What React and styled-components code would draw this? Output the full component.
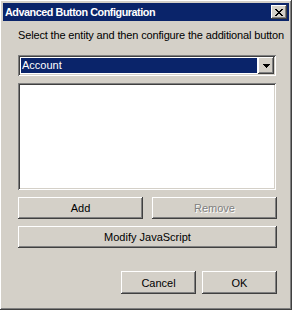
import React from "react";
import styled, { createGlobalStyle, css } from "styled-components";

const Global = createGlobalStyle`
  html, body { margin: 0; padding: 0; background: #d4d0c8; }
  body { font-family: "Liberation Sans", Arial, sans-serif; font-size: 11px; }
`;

const raised = css`
  box-shadow: inset -1px -1px #404040, inset 1px 1px #ffffff,
    inset -2px -2px #808080, inset 2px 2px #d4d0c8;
`;

const sunken = css`
  box-shadow: inset 1px 1px #808080, inset -1px -1px #ffffff,
    inset 2px 2px #404040, inset -2px -2px #d4d0c8;
`;

const Window = styled.div`
  box-sizing: border-box;
  width: 292px;
  height: 310px;
  padding: 3px;
  background: #d4d0c8;
  box-shadow: inset -1px -1px #404040, inset 1px 1px #ffffff,
    inset -2px -2px #808080, inset 2px 2px #d4d0c8;
  display: flex;
  flex-direction: column;
`;

const TitleBar = styled.div`
  height: 18px;
  background: #0a246a;
  display: flex;
  align-items: center;
  justify-content: space-between;
  padding: 0 2px 0 2px;
`;

const Title = styled.span`
  color: #ffffff;
  font-weight: bold;
  font-size: 10.8px;
  letter-spacing: -0.45px;
  line-height: 18px;
`;

const CloseButton = styled.div`
  box-sizing: border-box;
  width: 16px;
  height: 14px;
  background: #d4d0c8;
  ${raised};
  display: flex;
  align-items: center;
  justify-content: center;
`;

const Content = styled.div`
  display: flex;
  flex-direction: column;
  padding: 0 12px 0 15px;
`;

const Label = styled.div`
  margin-top: 8px;
  line-height: 13px;
  color: #000;
  white-space: nowrap;
  letter-spacing: -0.15px;
`;

const Combo = styled.div`
  box-sizing: border-box;
  margin-top: 13px;
  height: 21px;
  width: 258px;
  background: #ffffff;
  ${sunken};
  padding: 2px;
  display: flex;
  gap: 1px;
`;

const Selected = styled.div`
  flex: 1;
  margin: 1px 0 1px 1px;
  background: #0a246a;
  color: #fff;
  line-height: 15px;
  padding-left: 1px;
`;

const ArrowButton = styled.div`
  box-sizing: border-box;
  width: 16px;
  height: 17px;
  background: #d4d0c8;
  ${raised};
  display: flex;
  align-items: center;
  justify-content: center;
`;

const ListBox = styled.div`
  box-sizing: border-box;
  margin-top: 7px;
  height: 107px;
  width: 258px;
  background: #ffffff;
  ${sunken};
`;

const Row = styled.div`
  display: flex;
  gap: ${(p) => p.$gap}px;
  margin-top: ${(p) => p.$top}px;
  justify-content: ${(p) => (p.$end ? "flex-end" : "flex-start")};
`;

const Button = styled.div`
  box-sizing: border-box;
  width: ${(p) => p.$w}px;
  height: ${(p) => p.$h || 22}px;
  background: #d4d0c8;
  ${raised};
  display: flex;
  align-items: center;
  justify-content: center;
  color: ${(p) => (p.$disabled ? "#808080" : "#000")};
  text-shadow: ${(p) => (p.$disabled ? "1px 1px 0 #ffffff" : "none")};
  font-size: 11px;
`;

export default function App() {
  return (
    <>
      <Global />
      <Window>
        <TitleBar>
          <Title>Advanced Button Configuration</Title>
          <CloseButton>
            <svg width="8" height="7" viewBox="0 0 8 7">
              <path
                d="M0 0h2v1h1v1h2V1h1V0h2v1H7v1H6v1H5v1h1v1h1v1h1v1H6V6H5V5H3v1H2v1H0V6h1V5h1V4h1V3H2V2H1V1H0z"
                fill="#000"
              />
            </svg>
          </CloseButton>
        </TitleBar>
        <Content>
          <Label>Select the entity and then configure the additional button</Label>
          <Combo>
            <Selected>Account</Selected>
            <ArrowButton>
              <svg width="7" height="4" viewBox="0 0 7 4">
                <path d="M0 0h7v1H6v1H5v1H4v1H3V3H2V2H1V1H0z" fill="#000" />
              </svg>
            </ArrowButton>
          </Combo>
          <ListBox />
          <Row $gap={9} $top={7}>
            <Button $w={125}>Add</Button>
            <Button $w={125} $disabled>
              Remove
            </Button>
          </Row>
          <Row $gap={0} $top={7}>
            <Button $w={259}>Modify JavaScript</Button>
          </Row>
          <Row $gap={6} $top={23} $end>
            <Button $w={75} $h={23}>
              Cancel
            </Button>
            <Button $w={75} $h={23}>
              OK
            </Button>
          </Row>
        </Content>
      </Window>
    </>
  );
}
